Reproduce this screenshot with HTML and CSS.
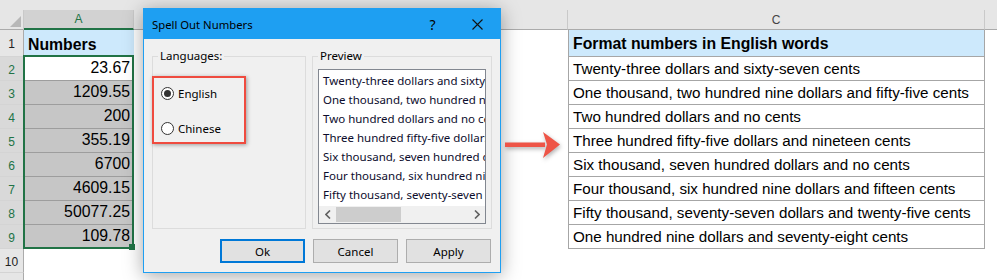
FILE: index.html
```html
<!DOCTYPE html>
<html lang="en">
<head>
  <meta charset="UTF-8">
  <title>Spell Out Numbers</title>
  <link rel="stylesheet" href="styles.css">
</head>
<body>

<div class="sheet">
  <div class="topstrip"></div>
  <div class="grid">
    <div class="corner"><span class="tri"></span></div>
    <div class="colhead on">A</div>
    <div class="colhead"></div>
    <div class="colhead">C</div>
    <div class="colhead last"></div>

    <div class="rowhead">1</div>
    <div class="cell hd">Numbers</div>
    <div class="cell"></div>
    <div class="cell c hd">Format numbers in English words</div>
    <div class="cell"></div>

    <div class="rowhead on">2</div>
    <div class="cell num active">23.67</div>
    <div class="cell"></div>
    <div class="cell c">Twenty-three dollars and sixty-seven cents</div>
    <div class="cell"></div>

    <div class="rowhead on">3</div>
    <div class="cell num">1209.55</div>
    <div class="cell"></div>
    <div class="cell c">One thousand, two hundred nine dollars and fifty-five cents</div>
    <div class="cell"></div>

    <div class="rowhead on">4</div>
    <div class="cell num">200</div>
    <div class="cell"></div>
    <div class="cell c">Two hundred dollars and no cents</div>
    <div class="cell"></div>

    <div class="rowhead on">5</div>
    <div class="cell num">355.19</div>
    <div class="cell"></div>
    <div class="cell c">Three hundred fifty-five dollars and nineteen cents</div>
    <div class="cell"></div>

    <div class="rowhead on">6</div>
    <div class="cell num">6700</div>
    <div class="cell"></div>
    <div class="cell c">Six thousand, seven hundred dollars and no cents</div>
    <div class="cell"></div>

    <div class="rowhead on">7</div>
    <div class="cell num">4609.15</div>
    <div class="cell"></div>
    <div class="cell c">Four thousand, six hundred nine dollars and fifteen cents</div>
    <div class="cell"></div>

    <div class="rowhead on">8</div>
    <div class="cell num">50077.25</div>
    <div class="cell"></div>
    <div class="cell c">Fifty thousand, seventy-seven dollars and twenty-five cents</div>
    <div class="cell"></div>

    <div class="rowhead on">9</div>
    <div class="cell num">109.78</div>
    <div class="cell"></div>
    <div class="cell c">One hundred nine dollars and seventy-eight cents</div>
    <div class="cell"></div>

    <div class="rowhead">10</div>
    <div class="cell"></div>
    <div class="cell"></div>
    <div class="cell"></div>
    <div class="cell"></div>

    <div class="rowhead">11</div>
    <div class="cell"></div>
    <div class="cell"></div>
    <div class="cell"></div>
    <div class="cell"></div>

    <div class="sel"><span class="handle"></span></div>
  </div>
</div>

<div class="dialog">
  <div class="titlebar">
    <div class="title">Spell Out Numbers</div>
    <div class="tbtn help">?</div>
    <div class="tbtn">
      <svg width="11" height="11" viewBox="0 0 11 11"><path d="M0.5 0.5 L10.5 10.5 M10.5 0.5 L0.5 10.5" stroke="#111" stroke-width="1.1" fill="none"/></svg>
    </div>
  </div>
  <div class="body">
    <div class="groups">
      <fieldset class="lang">
        <legend>Languages:</legend>
        <div class="radios">
          <div class="radio"><span class="dot checked"></span>English</div>
          <div class="radio"><span class="dot"></span>Chinese</div>
        </div>
      </fieldset>
      <fieldset class="preview">
        <legend>Preview</legend>
        <div class="listbox">
          <div class="lines">
            <div>Twenty-three dollars and sixty-seven cents</div>
            <div>One thousand, two hundred nine dollars and fifty-five cents</div>
            <div>Two hundred dollars and no cents</div>
            <div>Three hundred fifty-five dollars and nineteen cents</div>
            <div>Six thousand, seven hundred dollars and no cents</div>
            <div>Four thousand, six hundred nine dollars and fifteen cents</div>
            <div>Fifty thousand, seventy-seven dollars and twenty-five cents</div>
            <div>One hundred nine dollars and seventy-eight cents</div>
          </div>
          <div class="hscroll">
            <div class="sbtn"><svg width="6" height="9" viewBox="0 0 6 9"><path d="M5 0.5 L1 4.5 L5 8.5" stroke="#606060" stroke-width="1.6" fill="none"/></svg></div>
            <div class="track"><div class="thumb"></div></div>
            <div class="sbtn"><svg width="6" height="9" viewBox="0 0 6 9"><path d="M1 0.5 L5 4.5 L1 8.5" stroke="#606060" stroke-width="1.6" fill="none"/></svg></div>
          </div>
        </div>
      </fieldset>
    </div>
    <div class="buttons">
      <button class="btn default">Ok</button>
      <button class="btn">Cancel</button>
      <button class="btn">Apply</button>
    </div>
    <div class="mark"></div>
  </div>
</div>

<svg class="arrow" width="64" height="36" viewBox="0 0 64 36">
  <rect x="5" y="14.5" width="40" height="4.5" fill="#ee5547"/>
  <path d="M43 4 L60 16.5 L43 30 L47 16.5 Z" fill="#ee5547"/>
</svg>

</body>
</html>
```

FILE: styles.css
```css
* {
  box-sizing: border-box;
}

body {
  margin: 0;
  width: 997px;
  height: 280px;
  overflow: hidden;
  position: relative;
  background: #fff;
  font-family: "Liberation Sans", Arial, sans-serif;
  color: #000;
}

/* spreadsheet */
.topstrip {
  height: 10px;
  background: #e6e6e6;
}

.grid {
  position: relative;
  display: grid;
  grid-template-columns: 24px 110px 434px 417px 12px;
  grid-template-rows: 20px 27px repeat(10, 24px);
}

.corner, .colhead {
  background: #e6e6e6;
  border-right: 1px solid #c9c9c9;
  border-bottom: 1px solid #ababab;
}

.corner {
  display: flex;
  justify-content: flex-end;
  align-items: flex-end;
  padding: 0 2px 2px 0;
}

.tri {
  width: 0;
  height: 0;
  border-left: 11px solid transparent;
  border-bottom: 11px solid #b8b8b8;
}

.colhead {
  display: flex;
  align-items: center;
  justify-content: center;
  font-size: 12px;
  color: #444;
}

.colhead.on {
  background: #d2d2d2;
  color: #217346;
  border-bottom: 2px solid #217346;
}

.colhead.last {
  border-right: none;
}

.rowhead {
  display: flex;
  align-items: center;
  justify-content: center;
  padding-top: 2px;
  background: #e6e6e6;
  border-right: 1px solid #ababab;
  border-bottom: 1px solid #d4d4d4;
  font-size: 12px;
  color: #222;
}

.rowhead.on {
  background: #d9d9d9;
  color: #217346;
}

.cell {
  display: flex;
  align-items: flex-end;
  padding: 0 4px 3px;
  font-size: 15.2px;
  white-space: nowrap;
  overflow: hidden;
}

.cell.num {
  justify-content: flex-end;
  font-size: 15.8px;
  background: #c6c6c6;
  border-bottom: 1px solid #9d9d9d;
}

.cell.num.active {
  background: #fff;
}

.cell.hd {
  font-weight: bold;
  font-size: 15.8px;
  background: #cde9fc;
}

.cell.c {
  border-left: 1px solid #a6a6a6;
  border-right: 1px solid #a6a6a6;
  border-bottom: 1px solid #a6a6a6;
}

/* selection frame lies over A2:A9 */
.sel {
  position: absolute;
  grid-column: 2 / 3;
  grid-row: 3 / 11;
  top: -2px;
  left: -1px;
  right: 0;
  bottom: 0;
  border: 2px solid #217346;
}

.handle {
  position: absolute;
  right: -3px;
  bottom: -3px;
  width: 6px;
  height: 6px;
  background: #217346;
}

/* dialog */
.dialog {
  position: absolute;
  left: 143px;
  top: 8px;
  width: 358px;
  height: 265px;
  display: flex;
  flex-direction: column;
  background: #f0f0f0;
  border: 1px solid #1e9ff2;
  box-shadow: 0 3px 18px rgba(0, 0, 0, 0.35);
  font-family: "Noto Sans", sans-serif;
  font-size: 11.5px;
  color: #000;
}

.titlebar {
  height: 30px;
  display: flex;
  align-items: center;
  background: #1e9ff2;
}

.title {
  flex: 1;
  padding-left: 8px;
  font-size: 11.3px;
}

.tbtn {
  width: 45px;
  height: 30px;
  display: flex;
  align-items: center;
  justify-content: center;
}

.tbtn.help {
  font-size: 14px;
}

.body {
  flex: 1;
  position: relative;
  display: flex;
  flex-direction: column;
  padding: 9px 8px;
}

.groups {
  display: flex;
  gap: 6px;
  height: 181px;
}

fieldset {
  margin: 0;
  padding: 0 5px 5px;
  border: 1px solid #dcdcdc;
  min-width: 0;
}

legend {
  padding: 0 2px;
  line-height: 16px;
}

.lang {
  width: 154px;
}

.preview {
  width: 180px;
}

.radios {
  margin-top: 21px;
  padding-left: 3px;
  display: flex;
  flex-direction: column;
  gap: 19px;
}

.radio {
  height: 16px;
  display: flex;
  align-items: center;
  gap: 4px;
}

.dot {
  width: 13px;
  height: 13px;
  border: 1px solid #333;
  border-radius: 50%;
  background: #fff;
  display: flex;
  align-items: center;
  justify-content: center;
}

.dot.checked::after {
  content: "";
  width: 7px;
  height: 7px;
  border-radius: 50%;
  background: #333;
}

.listbox {
  margin-top: 5px;
  height: 155px;
  display: flex;
  flex-direction: column;
  background: #fff;
  border: 1px solid #828790;
}

.lines {
  flex: 1;
  overflow: hidden;
  padding: 1px 0 0 4px;
  line-height: 19px;
  white-space: nowrap;
  color: #0c0c2c;
}

.hscroll {
  height: 17px;
  display: flex;
  background: #f0f0f0;
}

.sbtn {
  width: 17px;
  display: flex;
  align-items: center;
  justify-content: center;
}

.track {
  flex: 1;
  display: flex;
}

.thumb {
  width: 65px;
  margin: 1px 0;
  background: #cdcdcd;
}

.buttons {
  margin-top: 10px;
  display: flex;
  justify-content: flex-end;
  gap: 8px;
  padding-right: 1px;
}

.btn {
  width: 85px;
  height: 24px;
  padding: 0;
  background: #e1e1e1;
  border: 1px solid #adadad;
  font: inherit;
  color: #000;
}

.btn.default {
  border: 2px solid #0078d7;
}

/* red annotation box over the radio buttons */
.mark {
  position: absolute;
  left: 8px;
  top: 37px;
  width: 94px;
  height: 68px;
  border: 2px solid #ef4b3f;
  box-shadow: 1px 1px 4px rgba(0, 0, 0, 0.35);
}

.arrow {
  position: absolute;
  left: 500px;
  top: 128px;
  filter: drop-shadow(1px 2px 2px rgba(0, 0, 0, 0.3));
}
```
